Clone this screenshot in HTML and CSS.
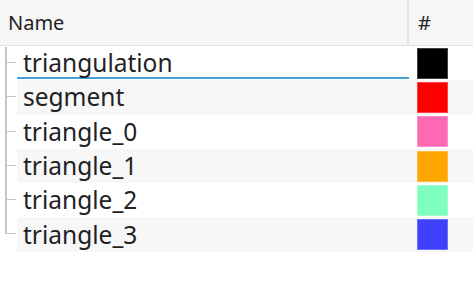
FILE: index.html
```html
<!DOCTYPE html>
<html lang="en">
<head>
  <meta charset="UTF-8" />
  <title>Layers</title>
  <link rel="stylesheet" href="styles.css">
</head>
<body>
  <div class="tree">
    <div class="head">
      <div class="col-name">Name</div>
      <div class="col-color">#</div>
    </div>
    <div class="rows">
      <div class="row">
        <div class="branch"></div>
        <div class="cell-name"><span class="edit">triangulation</span></div>
        <div class="cell-color"><span class="swatch" style="background:#000000"></span></div>
      </div>
      <div class="row alt">
        <div class="branch"></div>
        <div class="cell-name"><span class="label">segment</span></div>
        <div class="cell-color"><span class="swatch" style="background:#ff0000"></span></div>
      </div>
      <div class="row">
        <div class="branch"></div>
        <div class="cell-name"><span class="label">triangle_0</span></div>
        <div class="cell-color"><span class="swatch" style="background:#ff69b4"></span></div>
      </div>
      <div class="row alt">
        <div class="branch"></div>
        <div class="cell-name"><span class="label">triangle_1</span></div>
        <div class="cell-color"><span class="swatch" style="background:#ffa500"></span></div>
      </div>
      <div class="row">
        <div class="branch"></div>
        <div class="cell-name"><span class="label">triangle_2</span></div>
        <div class="cell-color"><span class="swatch" style="background:#7fffbf"></span></div>
      </div>
      <div class="row alt last">
        <div class="branch"></div>
        <div class="cell-name"><span class="label">triangle_3</span></div>
        <div class="cell-color"><span class="swatch" style="background:#4040ff"></span></div>
      </div>
    </div>
  </div>
</body>
</html>
```

FILE: styles.css
```css
/* ===== base ===== */
*{box-sizing:border-box;}
html,body{margin:0;}
body{
  background:#fff;color:#1f2225;
  font-family:'Noto Sans',sans-serif;
  width:474px;height:282px;overflow:hidden;
}
.tree{width:473px;}

/* ===== header ===== */
.head{
  display:flex;height:46px;
  background:#f6f6f6;border-bottom:1px solid #e3e3e3;
  font-size:20px;
}
.col-name{
  width:409px;padding:9px 0 0 8px;
  border-right:2px solid #e4e4e4;
}
.col-color{flex:1;padding:9px 0 0 9px;}

/* ===== rows ===== */
.row{display:flex;height:34.3px;}
.row.alt .cell-name,
.row.alt .cell-color{background:#f7f7f7;}

/* tree connector lines */
.branch{width:17px;position:relative;flex:none;}
.branch::before{
  content:'';position:absolute;left:5px;top:0;bottom:0;
  border-left:2px solid #c6c6c6;
}
.row:first-child .branch::before{top:1px;}
.row.last .branch::before{bottom:auto;height:17px;}
.branch::after{
  content:'';position:absolute;left:7px;top:16px;width:9px;
  border-top:1px solid #c6c6c6;
}

.cell-name{
  width:392px;display:flex;align-items:center;
  font-size:24.5px;
}
.label{padding-left:6px;line-height:30px;}
.edit{
  flex:1;align-self:flex-start;padding:3px 0 0 6px;
  background:#fff;line-height:28px;
  border-bottom:2px solid #47a0d4;
}
.cell-color{flex:1;display:flex;align-items:center;padding-left:8px;}
.swatch{
  width:31px;height:31px;
  box-shadow:inset 0 0 0 1px rgba(255,255,255,.25);
}
```
